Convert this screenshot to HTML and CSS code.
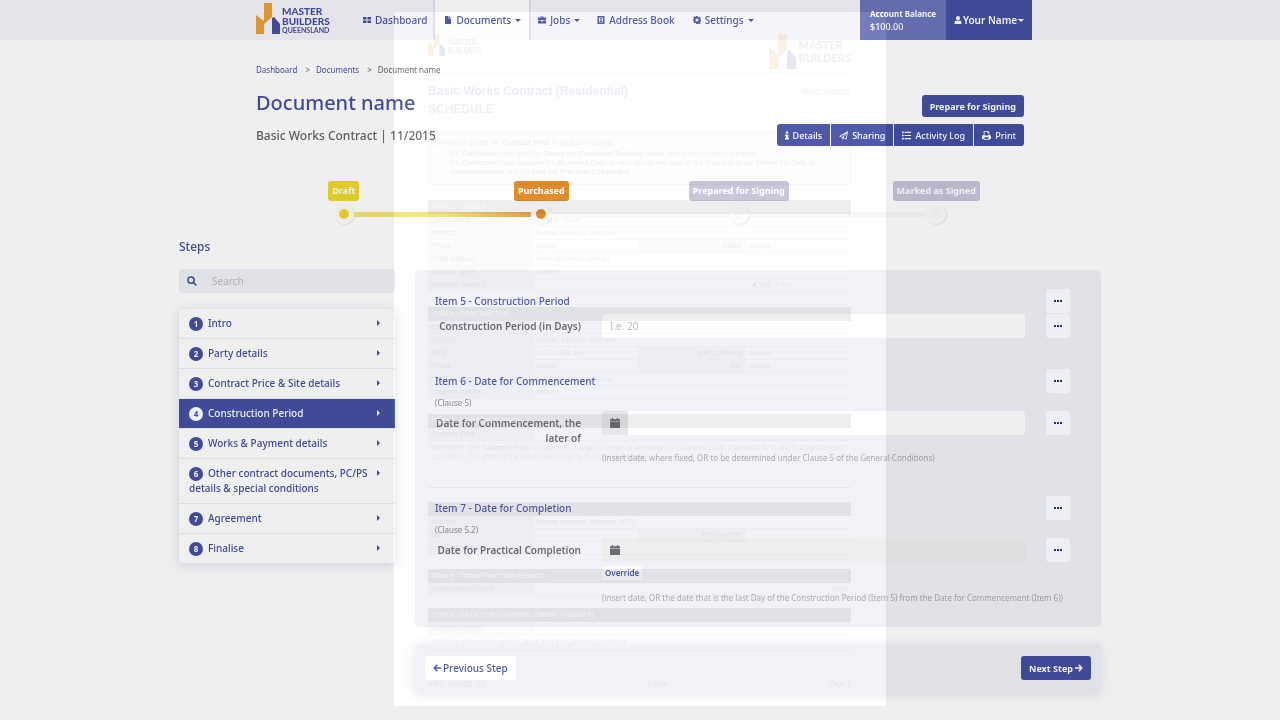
FILE: index.html
```html
<!DOCTYPE html>
<html lang="en">
<head>
    <meta charset="UTF-8">
    <meta name="viewport" content="width=device-width, initial-scale=1.0">
    <title>Document name | Master Builders Queensland</title>
    <link rel="stylesheet" href="styles.css">
</head>
<body>
    <!-- Shared icons -->
    <svg class="sprite" aria-hidden="true">
        <symbol id="logo-mark" viewBox="0 0 24 31">
            <path fill="#e0952f" d="M0 12l8 6V0h8v14l-8 7v10H0z"/>
            <path fill="#3f4a98" d="M16 31V15l2-1 6 7v10z"/>
        </symbol>
        <symbol id="i-grid" viewBox="0 0 16 16"><path d="M0 2h7v5H0zM9 2h7v5H9zM0 9h7v5H0zM9 9h7v5H9z"/></symbol>
        <symbol id="i-file" viewBox="0 0 16 16"><path d="M2 0h7v5h5v11H2zM10 0l4 4h-4z"/></symbol>
        <symbol id="i-case" viewBox="0 0 16 16"><path d="M5 3V1h6v2h5v5H0V3zm1.500 0h3V2.300h-3zM0 9h6v2h4V9h6v6H0z"/></symbol>
        <symbol id="i-book" viewBox="0 0 16 16"><path fill-rule="evenodd" d="M1 0h14v16H1zm3 3v10h8V3zm4 1a2 2 0 110 4 2 2 0 010-4zm-3 8c0-4 6-4 6 0z"/></symbol>
        <symbol id="i-gear" viewBox="0 0 16 16"><path fill-rule="evenodd" d="M6.500 0h3l.5 2.200 1.500.6 1.900-1.200 2 2-1.200 2 .6 1.400 1.200.5v3l-1.200.5-.6 1.400 1.200 2-2 2-2-1.200-1.400.6-.5 1.200h-3L6 13.800l-1.500-.6-1.900 1.200-2-2 1.200-2-.6-1.400L0 8.500V7l1.200-1 .6-1.400L.6 2.600l2-2 2 1.200L6 1.200zM8 5a3 3 0 100 6 3 3 0 000-6z"/></symbol>
        <symbol id="i-user" viewBox="0 0 16 16"><path d="M8 0a4 4 0 014 4c0 3-2 5-4 5S4 7 4 4a4 4 0 014-4zM1 16c0-5 1-7 4-7 2 2 4 2 6 0 3 0 4 2 4 7z"/></symbol>
        <symbol id="i-info" viewBox="4 0 8 16"><path d="M5.500 0h5v4h-5zM4 6h6.500v7H12v3H4v-3h1.500V9H4z"/></symbol>
        <symbol id="i-plane" viewBox="0 0 16 16"><path fill-rule="evenodd" d="M16 0l-2.500 15-5-2L6 16v-4L0 9.500zM3 9.300l3 1.200L12.500 4zm4.500 2l5 2L14 4z"/></symbol>
        <symbol id="i-list" viewBox="0 0 16 16"><path d="M0 1h3v3H0zM4.500 1.500H16v2H4.500zM0 6.500h3v3H0zM4.500 7H16v2H4.500zM0 12h3v3H0zM4.500 12.500H16v2H4.500z"/></symbol>
        <symbol id="i-print" viewBox="0 0 16 16"><path fill-rule="evenodd" d="M3 0h8l2 2v5h1l2 2v5h-3v2H3v-2H0V9l2-2h1zm1.500 1.500V8h7V3.500h-2v-2zM4.500 11v3.500h7V11z"/></symbol>
        <symbol id="i-search" viewBox="0 0 16 16"><path fill="none" stroke="currentColor" stroke-width="2.500" d="M6.500 1.500a5 5 0 110 10 5 5 0 010-10zM10 10l5 5"/></symbol>
        <symbol id="i-cal" viewBox="0 0 16 16"><path d="M0 2h3V0h2v2h6V0h2v2h3v3H0zM0 6h16v10H0z"/></symbol>
        <symbol id="i-left" viewBox="0 0 16 16"><path fill="none" stroke="currentColor" stroke-width="3" d="M8.500 1.500L2.500 8l6 6.500M3 8h13"/></symbol>
        <symbol id="i-right" viewBox="0 0 16 16"><path fill="none" stroke="currentColor" stroke-width="3" d="M7.500 1.500l6 6.500-6 6.500M13 8H0"/></symbol>
    </svg>

    <header class="topbar">
        <div class="topbar-inner">
            <a class="brand" href="#">
                <svg class="brand-mark"><use href="#logo-mark"/></svg>
                <span class="brand-name">MASTER<br>BUILDERS<small>QUEENSLAND</small></span>
            </a>
            <nav class="nav">
                <a href="#"><svg class="icon"><use href="#i-grid"/></svg>Dashboard</a>
                <a href="#" class="active"><svg class="icon"><use href="#i-file"/></svg>Documents<i class="caret"></i></a>
                <a href="#"><svg class="icon"><use href="#i-case"/></svg>Jobs<i class="caret"></i></a>
                <a href="#"><svg class="icon"><use href="#i-book"/></svg>Address Book</a>
                <a href="#"><svg class="icon"><use href="#i-gear"/></svg>Settings<i class="caret"></i></a>
            </nav>
            <div class="account">
                <div class="balance"><strong>Account Balance</strong><span>$100.00</span></div>
                <button class="user" type="button"><svg class="icon"><use href="#i-user"/></svg>Your Name<i class="caret"></i></button>
            </div>
        </div>
    </header>

    <section class="intro">
        <div>
            <nav class="crumbs">
                <a href="#">Dashboard</a><span>&gt;</span><a href="#">Documents</a><span>&gt;</span>Document name
            </nav>
            <h1>Document name</h1>
            <p class="subtitle">Basic Works Contract | 11/2015</p>
        </div>
        <div class="actions">
            <button class="btn btn-primary strong" type="button">Prepare for Signing</button>
            <div class="btn-group">
                <button class="btn btn-primary" type="button"><svg class="icon narrow"><use href="#i-info"/></svg>Details</button>
                <button class="btn btn-primary" type="button"><svg class="icon"><use href="#i-plane"/></svg>Sharing</button>
                <button class="btn btn-primary" type="button"><svg class="icon"><use href="#i-list"/></svg>Activity Log</button>
                <button class="btn btn-primary" type="button"><svg class="icon"><use href="#i-print"/></svg>Print</button>
            </div>
        </div>
    </section>

    <ol class="progress">
        <li class="draft"><span class="tag">Draft</span><div class="track"><i></i><b></b><i></i></div></li>
        <li class="purchased"><span class="tag">Purchased</span><div class="track"><i></i><b></b><i></i></div></li>
        <li><span class="tag">Prepared for Signing</span><div class="track"><i></i><b></b><i></i></div></li>
        <li><span class="tag">Marked as Signed</span><div class="track"><i></i><b></b><i></i></div></li>
    </ol>

    <main class="layout">
        <aside>
            <h2>Steps</h2>
            <label class="search">
                <svg class="icon"><use href="#i-search"/></svg>
                <input type="search" placeholder="Search" aria-label="Search steps">
            </label>
            <nav class="steps">
                <a href="#"><span><b>1</b>Intro</span></a>
                <a href="#"><span><b>2</b>Party details</span></a>
                <a href="#"><span><b>3</b>Contract Price &amp; Site details</span></a>
                <a href="#" class="current"><span><b>4</b>Construction Period</span></a>
                <a href="#"><span><b>5</b>Works &amp; Payment details</span></a>
                <a href="#"><span><b>6</b>Other contract documents, PC/PS details &amp; special conditions</span></a>
                <a href="#"><span><b>7</b>Agreement</span></a>
                <a href="#"><span><b>8</b>Finalise</span></a>
            </nav>
        </aside>

        <div class="content">
            <form class="panel">
                <section class="item">
                    <h3>Item 5 - Construction Period</h3>
                    <button class="more" type="button" aria-label="More"><i></i><i></i><i></i></button>
                    <label for="period">Construction Period (in Days)</label>
                    <input id="period" class="field" type="text" placeholder="I.e. 20">
                    <button class="more" type="button" aria-label="More"><i></i><i></i><i></i></button>
                </section>
                <section class="item">
                    <h3>Item 6 - Date for Commencement</h3>
                    <button class="more" type="button" aria-label="More"><i></i><i></i><i></i></button>
                    <p class="clause">(Clause 5)</p>
                    <label for="commence">Date for Commencement, the later of</label>
                    <div class="date">
                        <svg class="icon"><use href="#i-cal"/></svg>
                        <input id="commence" class="field" type="text">
                    </div>
                    <button class="more" type="button" aria-label="More"><i></i><i></i><i></i></button>
                    <p class="help">(insert date, where fixed, OR to be determined under Clause 5 of the General Conditions)</p>
                </section>
                <section class="item">
                    <h3>Item 7 - Date for Completion</h3>
                    <button class="more" type="button" aria-label="More"><i></i><i></i><i></i></button>
                    <p class="clause">(Clause 5.2)</p>
                    <label for="complete">Date for Practical Completion</label>
                    <div class="date disabled">
                        <svg class="icon"><use href="#i-cal"/></svg>
                        <input id="complete" class="field" type="text" disabled>
                    </div>
                    <button class="more" type="button" aria-label="More"><i></i><i></i><i></i></button>
                    <button class="override" type="button">Override</button>
                    <p class="help">(insert date, OR the date that is the last Day of the Construction Period (Item 5) from the Date for Commencement (Item 6))</p>
                </section>
            </form>
            <footer class="pager">
                <button class="btn btn-light" type="button"><svg class="icon"><use href="#i-left"/></svg>Previous Step</button>
                <button class="btn btn-primary strong" type="button">Next Step<svg class="icon"><use href="#i-right"/></svg></button>
            </footer>
        </div>
    </main>

    <!-- Contract preview fading over the page -->
    <div class="sheet-glow"></div>
    <article class="sheet">
        <div class="sheet-head">
            <div class="sheet-logo small"><svg class="brand-mark"><use href="#logo-mark"/></svg><span>MASTER<br>BUILDERS</span></div>
            <div class="sheet-logo"><svg class="brand-mark"><use href="#logo-mark"/></svg><span>MASTER<br>BUILDERS</span></div>
        </div>
        <div class="sheet-title"><h4>Basic Works Contract (Residential)</h4><small>BWC 11/2015</small></div>
        <h5>SCHEDULE</h5>
        <div class="notice">
            WARNING: Under the <b>Contract Price</b> is subject to change
            <ul>
                <li>the <b>Contractor</b> must give the <b>Owner</b> the <b>Consumer Building Guide</b> before the Contract is signed</li>
                <li>the <b>Contractor</b> must calculate the <b>Business Days</b> in each period and state in the Schedule to the <b>Owner</b> the <b>Date of Commencement</b> and the <b>Date for Practical Completion</b></li>
            </ul>
        </div>
        <section class="block b1">
            <h6>ITEM 1 - OWNER</h6>
            <dl><dt>Owner name</dt><dd>Sample Owner</dd></dl>
            <dl><dt>Address</dt><dd>sample address, Brisbane</dd></dl>
            <dl class="split"><dt>Phone</dt><dd>sample</dd><dt>Mobile</dt><dd>sample</dd></dl>
            <dl><dt>Email address</dt><dd>owner@sample.com.au</dd></dl>
            <dl><dt>Owner's agent</dt><dd>sample</dd></dl>
            <dl><dt>Resident Owner?</dt><dd class="answer">■ Yes &nbsp; □ No</dd></dl>
        </section>
        <section class="block b2">
            <h6>ITEM 2 - CONTRACTOR</h6>
            <dl><dt>Name</dt><dd>sample</dd></dl>
            <dl><dt>Address</dt><dd>sample address, Brisbane</dd></dl>
            <dl class="split"><dt>ABN</dt><dd>11 222 333 444</dd><dt>QBCC licence</dt><dd>sample</dd></dl>
            <dl class="split"><dt>Phone</dt><dd>sample</dd><dt>Fax</dt><dd>sample</dd></dl>
            <dl><dt>Email address</dt><dd>builder@sample.com.au</dd></dl>
            <dl><dt>Contract number</dt><dd>sample</dd></dl>
        </section>
        <section class="block b3">
            <h6>ITEM 3 - CONTRACT PRICE</h6>
            <dl><dt>Contract Price</dt><dd></dd></dl>
            <p>WARNING: The <b>Contract Price</b> is subject to change (increase or decrease) in accordance with Clauses 4, 6, 7, and 8 of the General Conditions. The effect of the adjustments may be to increase the price.</p>
        </section>
        <section class="block b4">
            <h6></h6>
            <dl><dt>Address</dt><dd>sample address, Brisbane 4000</dd></dl>
            <dl class="split"><dt>Lot</dt><dd></dd><dt>Plan number</dt><dd></dd></dl>
            <dl><dt>Local authority</dt><dd></dd></dl>
        </section>
        <section class="block b5">
            <h6>ITEM 5 - CONSTRUCTION PERIOD</h6>
            <dl><dt>Construction Period</dt><dd class="end">days</dd></dl>
        </section>
        <section class="block b6">
            <h6>ITEM 6 - DATE FOR COMMENCEMENT (Clause 5)</h6>
            <dl><dt>Commencement</dt><dd></dd></dl>
            <p>OR to be determined under Clause 5 of the General Conditions</p>
        </section>
        <div class="sheet-foot"><span>BWC 11/2015 &nbsp; V2</span><span>Initials</span><span>Page 1</span></div>
    </article>
</body>
</html>
```
FILE: styles.css
```css
:root {
    --color-primary: #3f4a98;
    --color-background: #efefef;
    --color-panel: #e1e2e7;
    --color-text: #5b5b63;
    --color-muted: #9a9aa3;
    --color-draft: #e0cb2b;
    --color-purchased: #cf7c1a;
    --color-pending: #b9b8ca;
}

* {
    margin: 0;
    padding: 0;
    box-sizing: border-box;
}

body {
    position: relative;
    font-family: "Noto Sans", "Open Sans", sans-serif;
    font-size: 10px;
    font-weight: 500;
    line-height: 15px;
    background-color: var(--color-background);
    color: var(--color-text);
    min-height: 100vh;
}

a {
    color: var(--color-primary);
    text-decoration: none;
}

button,
input {
    font: inherit;
    border: none;
}

button {
    cursor: pointer;
}

.sprite {
    display: none;
}

.icon {
    width: 8px;
    height: 8px;
    fill: currentColor;
    flex: none;
}

.caret {
    border: 3px solid transparent;
    border-top-color: currentColor;
    border-bottom: none;
}

/* Top bar */
.topbar {
    background-color: #e4e4ea;
}

.topbar-inner {
    display: flex;
    align-items: center;
    width: 100%;
    max-width: 768px;
    height: 40px;
    margin: 0 auto;
}

.brand {
    display: flex;
    align-items: center;
    gap: 2px;
    width: 98px;
    margin-top: -3px;
}

.brand-mark {
    width: 24px;
    height: 31px;
    flex: none;
}

.brand-name {
    padding-top: 3px;
    font: 900 10px/10px "Lato", sans-serif;
}

.brand-name small {
    display: block;
    font-size: 7px;
    font-weight: 700;
    line-height: 8px;
}

.nav {
    display: flex;
    height: 40px;
}

.nav a {
    display: flex;
    align-items: center;
    gap: 4px;
    padding: 0 9px;
}

.nav a:first-child {
    padding-right: 8px;
}

.nav .caret {
    margin-right: -1px;
}

.nav .active {
    background-color: #eeeef1;
    box-shadow: 0 0 3px rgba(63, 74, 152, 0.4);
    clip-path: inset(0 -3px);
}

.account {
    display: flex;
    height: 40px;
    margin-left: auto;
    margin-right: -8px;
    color: #f0f0f6;
}

.balance {
    display: flex;
    flex-direction: column;
    justify-content: center;
    width: 86px;
    padding-left: 10px;
    background-color: #656cab;
    font-size: 9px;
    line-height: 13px;
    white-space: nowrap;
}

.balance strong {
    font-size: 8px;
}

.user {
    display: flex;
    align-items: center;
    justify-content: center;
    gap: 1px;
    width: 86px;
    background-color: var(--color-primary);
    color: inherit;
    font-weight: 600;
}

/* Title block */
.intro {
    display: flex;
    justify-content: space-between;
    align-items: flex-end;
    max-width: 768px;
    margin: 0 auto;
    padding-top: 22px;
}

.crumbs {
    font-size: 8px;
    font-weight: 400;
}

.crumbs span {
    margin: 0 6px 0 8px;
}

h1 {
    color: var(--color-primary);
    font-size: 20px;
    line-height: 30px;
    font-weight: 500;
    margin-top: 11px;
}

.subtitle {
    font-size: 12px;
    line-height: 20px;
    margin-top: 8px;
}

.actions {
    display: flex;
    flex-direction: column;
    align-items: flex-end;
    gap: 7px;
}

.btn {
    display: flex;
    align-items: center;
    gap: 4px;
    height: 22px;
    padding: 0 8px;
    border-radius: 3px;
}

.btn-primary {
    background-color: var(--color-primary);
    color: #f0f0f6;
}

.btn-light {
    background-color: var(--color-background);
    color: var(--color-primary);
}

.strong {
    font-size: 9px;
    font-weight: 700;
}

.btn-group {
    display: flex;
    gap: 1px;
}

.btn-group .btn {
    border-radius: 0;
    font-size: 9px;
}

.btn-group .icon {
    width: 9px;
    height: 9px;
}

.btn-group .narrow {
    width: 4px;
}

.btn-group .btn:first-child {
    border-radius: 3px 0 0 3px;
}

.btn-group .btn:last-child {
    border-radius: 0 3px 3px 0;
}

/* Progress */
.progress {
    display: grid;
    grid-template-columns: repeat(4, 1fr);
    max-width: 790px;
    margin: 35px auto 0;
    list-style: none;
    text-align: center;
}

.tag {
    display: inline-block;
    vertical-align: top;
    padding: 0 4px;
    border-radius: 3px;
    font-size: 9px;
    line-height: 20px;
    font-weight: 700;
    background-color: var(--color-pending);
    color: #efeff6;
}

.track {
    display: flex;
    align-items: center;
    height: 20px;
    margin-top: 3px;
}

.track i {
    flex: 1;
    height: 5px;
    background-color: #e8e8e8;
}

.track b {
    width: 20px;
    height: 20px;
    border: 5px solid #ededee;
    border-radius: 50%;
    background-color: #e8eaea;
    box-shadow: 1px 1px 2px rgba(0, 0, 0, 0.1);
}

.progress li:first-child i:first-child,
.progress li:last-child i:last-child {
    background: none;
}

.draft .tag,
.draft .track b {
    background-color: var(--color-draft);
}

.purchased .tag,
.purchased .track b {
    background-color: var(--color-purchased);
}

.draft .track i:last-child {
    background: #e6d56f;
}

.purchased .track i:first-child {
    background: linear-gradient(90deg, #e6d56f, #d8943c);
}

/* Steps and form */
.layout {
    display: grid;
    grid-template-columns: 216px 1fr;
    align-items: start;
    gap: 20px;
    max-width: 922px;
    margin: 15px auto 0;
}

h2 {
    color: var(--color-primary);
    font-size: 12px;
    line-height: 16px;
    font-weight: 500;
}

.content {
    padding-top: 31px;
}

.search {
    display: flex;
    align-items: center;
    gap: 15px;
    height: 24px;
    margin-top: 14px;
    padding-left: 8px;
    border-radius: 3px;
    background-color: var(--color-panel);
    color: var(--color-primary);
}

.search input {
    flex: 1;
    min-width: 0;
    background: none;
    font-weight: 400;
}

.search .icon,
.date .icon {
    width: 10px;
    height: 10px;
}

::placeholder {
    color: #adadb4;
    opacity: 1;
}

.steps {
    margin-top: 16px;
    border-radius: 4px;
    background-color: var(--color-background);
    box-shadow: 0 2px 12px rgba(63, 74, 152, 0.2);
}

.steps a {
    display: flex;
    justify-content: space-between;
    padding: 7px 15px 7px 10px;
    border-bottom: 1px solid #dfdfe3;
}

.steps a:last-child {
    border-bottom: none;
}

.steps a::after {
    content: "";
    margin-top: 4px;
    border: 3px solid transparent;
    border-left-color: currentColor;
    border-right: none;
    align-self: flex-start;
}

.steps b {
    display: inline-block;
    width: 14px;
    margin-right: 5px;
    border-radius: 50%;
    background-color: var(--color-primary);
    color: #efeff6;
    font-size: 8px;
    line-height: 14px;
    text-align: center;
}

.steps .current {
    background-color: var(--color-primary);
    color: #efeff6;
}

.steps .current b {
    background-color: #efeff6;
    color: var(--color-primary);
}

.panel {
    display: grid;
    gap: 31px;
    padding: 19px 31px 22px 20px;
    border-radius: 5px;
    background-color: var(--color-panel);
}

.item {
    display: grid;
    grid-template-columns: 146px 1fr 24px;
    column-gap: 21px;
    align-items: start;
}

.item h3 {
    grid-column: 1 / 3;
    color: var(--color-primary);
    font-size: 10px;
    line-height: 25px;
    font-weight: 500;
}

.item label {
    padding-top: 5px;
    text-align: right;
    font-weight: 600;
}

.clause {
    grid-column: 1 / 4;
    font-size: 8px;
    line-height: 17px;
    font-weight: 400;
    color: #77777f;
}

.field {
    width: 100%;
    height: 24px;
    padding: 0 8px;
    border-radius: 3px;
    background-color: var(--color-background);
    font-weight: 400;
}

.more {
    display: flex;
    align-items: center;
    justify-content: center;
    gap: 1px;
    height: 24px;
    border-radius: 3px;
    background-color: #eeeff4;
    color: #2b2f66;
}

.more i {
    width: 2px;
    height: 2px;
    background-color: currentColor;
}

.date {
    display: flex;
    align-items: center;
    border-radius: 3px;
    background-color: #d6d6d9;
}

.date .icon {
    margin: 0 8px;
}

.date .field {
    border-radius: 0 3px 3px 0;
}

.date.disabled,
.date.disabled .field {
    background-color: #dddedd;
}

.help {
    grid-column: 2 / 4;
    margin-top: 4px;
    font-size: 8px;
    line-height: 15px;
    font-weight: 400;
    color: var(--color-muted);
    white-space: nowrap;
}

.override {
    grid-column: 2;
    justify-self: start;
    margin-top: 4px;
    padding: 0 3px;
    font-size: 8px;
    font-weight: 600;
    line-height: 14px;
    background-color: #eaebf1;
    color: var(--color-primary);
}

.override + .help {
    margin-top: 10px;
}

.pager {
    display: flex;
    justify-content: space-between;
    margin-top: 17px;
    padding: 12px 10px;
    border-radius: 5px;
    background-color: var(--color-panel);
    box-shadow: 0 2px 12px rgba(63, 74, 152, 0.15);
}

.pager .btn {
    height: 24px;
    gap: 2px;
}

/* Contract preview: a brightening layer, then its faint print */
.sheet-glow,
.sheet {
    position: absolute;
    top: 12px;
    left: calc(50% - 246px);
    width: 492px;
    height: 694px;
    pointer-events: none;
}

.sheet-glow {
    background-color: #101010;
    mix-blend-mode: plus-lighter;
}

.sheet {
    padding: 20px 35px 0 34px;
    font: 400 7px/13px "Liberation Sans", sans-serif;
    color: rgba(60, 60, 80, 0.08);
    overflow: hidden;
}

.sheet-head {
    display: flex;
    justify-content: space-between;
    height: 42px;
    border-bottom: 1px solid rgba(60, 60, 80, 0.04);
}

.sheet-logo {
    display: flex;
    gap: 3px;
    padding-top: 2px;
    font: 900 11px/13px "Lato", sans-serif;
}

.sheet-logo span {
    padding-top: 4px;
}

.sheet-logo .brand-mark {
    width: 27px;
    height: 35px;
    opacity: 0.12;
}

.sheet-logo.small {
    font-size: 7px;
    line-height: 8px;
}

.sheet-logo.small .brand-mark {
    width: 17px;
    height: 22px;
}

.sheet-title {
    display: flex;
    justify-content: space-between;
    align-items: center;
    margin-top: 8px;
}

.sheet-title small {
    font-size: 8px;
}

.sheet h4 {
    font-size: 12px;
    line-height: 18px;
    color: rgba(63, 74, 152, 0.1);
}

.sheet h5 {
    font-size: 12px;
    line-height: 18px;
}

.notice {
    height: 53px;
    margin-top: 14px;
    padding: 4px 3px;
    border: 1px solid rgba(60, 60, 80, 0.03);
    background-color: rgba(60, 60, 80, 0.01);
    font-size: 7px;
    line-height: 12px;
}

.notice ul {
    margin-left: 18px;
}

.notice li {
    line-height: 9px;
}

.block {
    height: 92px;
    margin-top: 15px;
}

.block h6 {
    height: 14px;
    padding-left: 3px;
    background-color: rgba(40, 40, 50, 0.08);
    color: rgba(255, 255, 255, 0.4);
    font-size: 7px;
    line-height: 14px;
}

.block dl {
    display: grid;
    grid-template-columns: 105px 1fr;
    border-bottom: 1px solid rgba(60, 60, 80, 0.03);
    line-height: 12px;
}

.block .split {
    grid-template-columns: 105px 105px 108px 1fr;
}

.block dt {
    padding-left: 3px;
    background-color: rgba(60, 60, 80, 0.02);
}

.block dd {
    padding-left: 3px;
}

.block .split dt:nth-of-type(2),
.block dd.end {
    text-align: right;
    padding-right: 4px;
}

.block dd.answer {
    text-align: right;
    padding-right: 60px;
}

.block p {
    padding: 2px 3px;
    line-height: 9px;
}

.b3 {
    height: 74px;
    border-bottom: 1px solid rgba(60, 60, 80, 0.06);
}

.b4 {
    height: 52px;
    margin-top: 14px;
}

.b5 {
    height: 27px;
}

.b6 {
    height: 43px;
    margin-top: 12px;
    border-bottom: 1px solid rgba(60, 60, 80, 0.04);
}

.sheet-foot {
    display: flex;
    justify-content: space-between;
    margin-top: 26px;
}
```
